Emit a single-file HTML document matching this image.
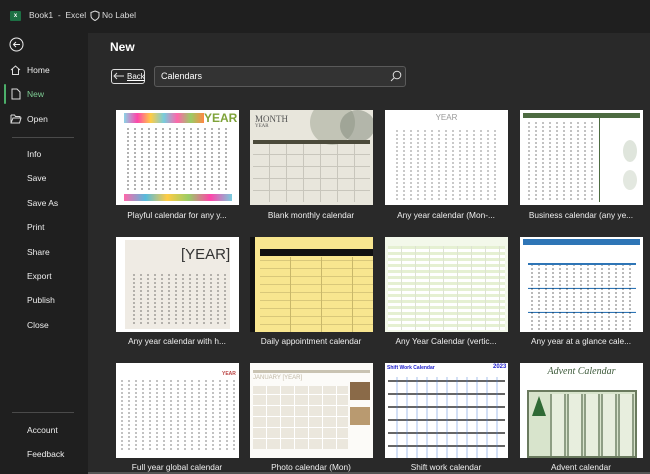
<!DOCTYPE html>
<html><head><meta charset="utf-8"><style>
*{margin:0;padding:0;box-sizing:border-box}
body{width:650px;height:474px;overflow:hidden;background:#292929;font-family:"Liberation Sans",sans-serif;color:#fff;position:relative}
#top{position:absolute;left:0;top:0;width:650px;height:33px;background:#1f1f1f;font-size:8.5px}
#side{position:absolute;left:0;top:33px;width:88px;height:441px;background:#1f1f1f}
.si{position:absolute;left:27px;font-size:8.5px;color:#eee}
.sep{position:absolute;left:12px;width:62px;height:1px;background:#4a4a4a}
.t{position:absolute;width:123px;height:95px;overflow:hidden;background:#fff}
.c{position:absolute;width:140px;text-align:center;font-size:8.3px;color:#f0f0f0}
.grid{position:absolute;background-image:repeating-linear-gradient(0deg,transparent 0 2px,#fff 2px 4px),repeating-linear-gradient(90deg,transparent 0 3px,rgba(0,0,0,.3) 3px 5px,transparent 5px 7px)}
</style></head><body>
<div id="top">
 <div style="position:absolute;left:10px;top:11px;width:11px;height:10px;background:#1d7044;border-radius:1px;font-size:6px;line-height:10px;text-align:center;font-weight:bold">x</div>
 <div style="position:absolute;left:29px;top:10px;color:#ddd;white-space:nowrap">Book1 &nbsp;- &nbsp;Excel</div>
 <svg style="position:absolute;left:90px;top:10px" width="10" height="11" viewBox="0 0 10 11"><path d="M5 1 L9 2.5 V6 C9 8 7 9.5 5 10.5 C3 9.5 1 8 1 6 V2.5Z" fill="none" stroke="#ddd" stroke-width="1"/></svg>
 <div style="position:absolute;left:102px;top:10px;color:#ddd">No Label</div>
</div>
<div id="side">
 <svg style="position:absolute;left:9px;top:4px" width="15" height="15" viewBox="0 0 15 15"><circle cx="7.5" cy="7.5" r="6.5" fill="none" stroke="#eee" stroke-width="1"/><path d="M11 7.5H4.5M7 5 4.5 7.5 7 10" fill="none" stroke="#eee" stroke-width="1"/></svg>
 <svg style="position:absolute;left:10px;top:32px" width="11" height="10" viewBox="0 0 11 10"><path d="M1 5 5.5 1 10 5M2.5 4V9.5H8.5V4" fill="none" stroke="#ddd"/></svg>
 <div class="si" style="top:32px">Home</div>
 <div style="position:absolute;left:4px;top:51px;width:2px;height:20px;background:#4caf6a;border-radius:1px"></div>
 <svg style="position:absolute;left:11px;top:55px" width="10" height="12" viewBox="0 0 10 12"><path d="M1 1H6L9 4V11H1Z" fill="none" stroke="#ddd"/></svg>
 <div class="si" style="top:56px;color:#7fcf95">New</div>
 <svg style="position:absolute;left:10px;top:81px" width="12" height="10" viewBox="0 0 12 10"><path d="M1 1H4.5L5.5 2.5H10V4M1 1V9H9.5L11 4H3L1 9" fill="none" stroke="#ddd"/></svg>
 <div class="si" style="top:81px">Open</div>
 <div class="sep" style="top:104px"></div>
 <div class="si" style="top:116px">Info</div>
 <div class="si" style="top:140px">Save</div>
 <div class="si" style="top:165px">Save As</div>
 <div class="si" style="top:189px">Print</div>
 <div class="si" style="top:214px">Share</div>
 <div class="si" style="top:238px">Export</div>
 <div class="si" style="top:262px">Publish</div>
 <div class="si" style="top:287px">Close</div>
 <div class="sep" style="top:379px"></div>
 <div class="si" style="top:392px">Account</div>
 <div class="si" style="top:416px">Feedback</div>
</div>
<div style="position:absolute;left:110px;top:40px;font-size:12px;font-weight:bold">New</div>
<div style="position:absolute;left:111px;top:69px;width:34px;height:15px;border:1px solid #ddd;border-radius:3px;font-size:8px;line-height:13px;padding-left:15px;text-decoration:underline">Back</div>
<svg style="position:absolute;left:113px;top:72px" width="12" height="8" viewBox="0 0 12 8"><path d="M11 4H1M4 1 1 4 4 7" fill="none" stroke="#ddd"/></svg>
<div style="position:absolute;left:154px;top:66px;width:252px;height:21px;background:#333;border:1px solid #5a5a5a;border-radius:3px;font-size:9px;line-height:19px;padding-left:6px">Calendars</div>
<svg style="position:absolute;left:390px;top:70px" width="12" height="12" viewBox="0 0 12 12"><circle cx="7" cy="5" r="3.8" fill="none" stroke="#ddd"/><path d="M4.3 7.7 1 11" stroke="#ddd"/></svg>

<!-- row 1 -->
<div class="t" style="left:116px;top:110px">
 <div style="position:absolute;left:8px;top:3px;width:80px;height:10px;background:linear-gradient(90deg,#8bd3e6,#f4a,#fc4,#7cd,#f6a,#9c6,#f84)"></div>
 <div style="position:absolute;left:88px;top:1px;font:bold 12px 'Liberation Sans';color:#7fa33a">YEAR</div>
 <div class="grid" style="left:8px;top:18px;width:108px;height:62px"></div>
 <div style="position:absolute;left:8px;top:84px;width:108px;height:7px;background:linear-gradient(90deg,#f6a,#5bd,#fc4,#9c6,#f4a,#7cd)"></div>
</div>
<div class="t" style="left:250px;top:110px;background:#e8e6dc">
 <div style="position:absolute;left:5px;top:4px;font:9px 'Liberation Serif';color:#555">MONTH</div>
 <div style="position:absolute;left:5px;top:14px;font:5px 'Liberation Serif';color:#555">YEAR</div>
 <div style="position:absolute;left:60px;top:-10px;width:45px;height:45px;border-radius:50%;background:#a9ad9c;opacity:.6"></div>
 <div style="position:absolute;left:90px;top:0;width:35px;height:32px;border-radius:50%;background:#7d8577;opacity:.5"></div>
 <div style="position:absolute;left:3px;top:30px;width:117px;height:4px;background:#4b4a3a"></div>
 <div style="position:absolute;left:3px;top:34px;width:117px;height:58px;background-image:repeating-linear-gradient(90deg,transparent 0 16px,#c8c6bc 16px 17px),repeating-linear-gradient(0deg,transparent 0 11px,#c8c6bc 11px 12px)"></div>
</div>
<div class="t" style="left:385px;top:110px">
 <div style="position:absolute;left:0;width:123px;top:3px;text-align:center;font-size:8px;color:#999">YEAR</div>
 <div class="grid" style="left:8px;top:18px;width:108px;height:72px;opacity:.7"></div>
</div>
<div class="t" style="left:520px;top:110px">
 <div style="position:absolute;left:3px;top:3px;width:117px;height:5px;background:#4d6b41"></div>
 <div class="grid" style="left:5px;top:12px;width:70px;height:78px;opacity:.8"></div>
 <div style="position:absolute;left:79px;top:8px;width:1px;height:84px;background:#4d6b41"></div>
 <div style="position:absolute;left:103px;top:30px;width:14px;height:22px;border-radius:50%;background:#dfe5dc"></div>
 <div style="position:absolute;left:103px;top:60px;width:14px;height:20px;border-radius:50%;background:#e3e8e0"></div>
</div>
<div class="c" style="left:107px;top:210px">Playful calendar for any y...</div>
<div class="c" style="left:241px;top:210px">Blank monthly calendar</div>
<div class="c" style="left:376px;top:210px">Any year calendar (Mon-...</div>
<div class="c" style="left:511px;top:210px">Business calendar (any ye...</div>

<!-- row 2 -->
<div class="t" style="left:116px;top:237px">
 <div style="position:absolute;left:9px;top:3px;width:105px;height:89px;background:#efebe4"></div>
 <div style="position:absolute;left:65px;top:9px;font:15px 'Liberation Sans';color:#333">[YEAR]</div>
 <div class="grid" style="left:14px;top:35px;width:96px;height:52px;background-image:repeating-linear-gradient(0deg,transparent 0 2px,#efebe4 2px 4px),repeating-linear-gradient(90deg,transparent 0 3px,rgba(0,0,0,.25) 3px 5px,transparent 5px 7px)"></div>
</div>
<div class="t" style="left:250px;top:237px;background:#f8e68f">
 <div style="position:absolute;left:0;top:0;width:5px;height:95px;background:#111"></div>
 <div style="position:absolute;left:10px;top:12px;width:113px;height:7px;background:#111"></div>
 <div style="position:absolute;left:10px;top:20px;width:113px;height:75px;background-image:repeating-linear-gradient(90deg,transparent 0 30px,#c9b86a 30px 31px),repeating-linear-gradient(0deg,transparent 0 7px,#d9c87a 7px 8px)"></div>
</div>
<div class="t" style="left:385px;top:237px;background:#f3f8ea">
 <div style="position:absolute;left:3px;top:9px;width:117px;height:84px;background-image:repeating-linear-gradient(90deg,transparent 0 13px,#dde3d2 13px 14px),repeating-linear-gradient(0deg,#fff 0 3px,#e5f0d2 3px 6px)"></div>
</div>
<div class="t" style="left:520px;top:237px">
 <div style="position:absolute;left:3px;top:2px;width:117px;height:6px;background:#2e75b6"></div>
 <div style="position:absolute;left:8px;top:25px;width:108px;height:68px;background-image:repeating-linear-gradient(0deg,transparent 0 17px,#2e75b6 17px 19px,transparent 19px 24px)"></div>
 <div class="grid" style="left:8px;top:28px;width:108px;height:65px;opacity:.9"></div>
</div>
<div class="c" style="left:107px;top:336px">Any year calendar with h...</div>
<div class="c" style="left:241px;top:336px">Daily appointment calendar</div>
<div class="c" style="left:376px;top:336px">Any Year Calendar (vertic...</div>
<div class="c" style="left:511px;top:336px">Any year at a glance cale...</div>

<!-- row 3 -->
<div class="t" style="left:116px;top:363px">
 <div style="position:absolute;left:106px;top:8px;font:bold 5px 'Liberation Sans';color:#b44">YEAR</div>
 <div class="grid" style="left:2px;top:17px;width:119px;height:70px;opacity:.8"></div>
</div>
<div class="t" style="left:250px;top:363px;background:#fcfbf8">
 <div style="position:absolute;left:3px;top:7px;width:117px;height:3px;background:#c9c3b2"></div>
 <div style="position:absolute;left:3px;top:12px;font-size:6px;color:#c0b8a5">JANUARY [YEAR]</div>
 <div style="position:absolute;left:3px;top:23px;width:95px;height:63px;background:#ebe7dd;background-image:repeating-linear-gradient(90deg,transparent 0 13px,#fff 13px 14px),repeating-linear-gradient(0deg,transparent 0 10px,#fff 10px 11px)"></div>
 <div style="position:absolute;left:100px;top:19px;width:20px;height:18px;background:#8a6a48"></div>
 <div style="position:absolute;left:100px;top:44px;width:20px;height:18px;background:#b99a70"></div>
</div>
<div class="t" style="left:385px;top:363px">
 <div style="position:absolute;left:2px;top:2px;font:bold 5px 'Liberation Sans';color:#2222cc">Shift Work Calendar</div>
 <div style="position:absolute;left:108px;top:1px;font:bold 6px 'Liberation Sans';color:#2222cc">2023</div>
 <div style="position:absolute;left:3px;top:14px;width:117px;height:81px;background-image:repeating-linear-gradient(0deg,#fff 0 11px,#666 11px 13px)"></div>
 <div style="position:absolute;left:3px;top:14px;width:117px;height:81px;background-image:repeating-linear-gradient(90deg,transparent 0 8px,rgba(80,130,220,.25) 8px 10px)"></div>
</div>
<div class="t" style="left:520px;top:363px">
 <div style="position:absolute;left:0;width:123px;top:3px;text-align:center;font:italic 10px 'Liberation Serif';color:#3d5a3a">Advent Calendar</div>
 <div style="position:absolute;left:7px;top:27px;width:110px;height:68px;background:#d8e4cc;border:2px solid #6a7a5e"></div>
 <div style="position:absolute;left:30px;top:31px;width:84px;height:62px;background-image:repeating-linear-gradient(90deg,#6f7f65 0 2px,#eef2e6 2px 14px,#6f7f65 14px 16px,transparent 16px 17px);opacity:.7"></div>
 <div style="position:absolute;left:12px;top:33px;width:0;height:0;border-left:7px solid transparent;border-right:7px solid transparent;border-bottom:20px solid #2f6a35"></div>
</div>
<div class="c" style="left:107px;top:462px">Full year global calendar</div>
<div class="c" style="left:241px;top:462px">Photo calendar (Mon)</div>
<div class="c" style="left:376px;top:462px">Shift work calendar</div>
<div class="c" style="left:511px;top:462px">Advent calendar</div>
<div style="position:absolute;left:88px;top:472px;width:562px;height:2px;background:#555"></div>
</body></html>
